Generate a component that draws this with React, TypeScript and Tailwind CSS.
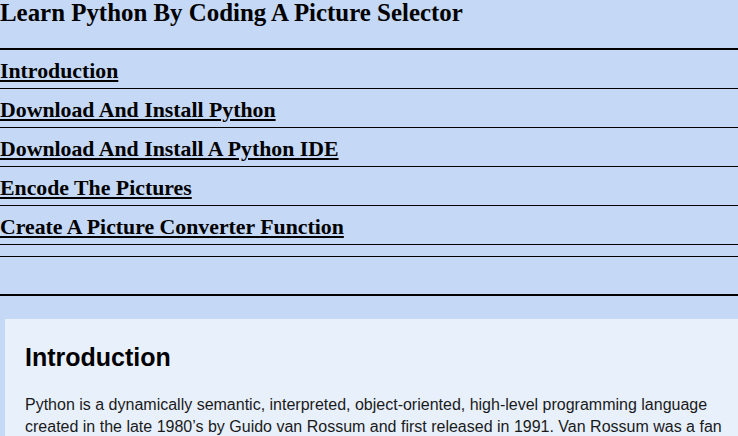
const NAV = [
  'Introduction',
  'Download And Install Python',
  'Download And Install A Python IDE',
  'Encode The Pictures',
  'Create A Picture Converter Function',
];

export default function App() {
  return (
    <div className="min-h-screen bg-[#c5d8f5] font-['Liberation_Serif',serif] text-black">
      <header>
        <h1 className="h-[48px] text-[24.9px] font-bold leading-[26px]">Learn Python By Coding A Picture Selector</h1>
        <nav className="border-t-2 border-black">
          <ul>
            {NAV.map((item) => (
              <li key={item} className="flex h-[39px] items-center border-b border-black pt-[6px]">
                <a href="#" className="text-[21.8px] font-bold leading-none underline">
                  {item}
                </a>
              </li>
            ))}
          </ul>
          <div className="mt-[11px] h-[40px] border-t border-b-2 border-black" />
        </nav>
      </header>

      <main className="pt-[23px] pl-[5px]">
        <section className="bg-[#e8f0fc] pl-5 pr-3 pt-[24px] pb-6 font-['Liberation_Sans',Arial,sans-serif]">
          <h2 className="text-[25px] font-bold leading-[29px]">Introduction</h2>
          <p className="mt-[22px] text-[16px] leading-[22px] text-[#1a1a1a]">
            Python is a dynamically semantic, interpreted, object-oriented, high-level programming language
            created in the late 1980’s by Guido van Rossum and first released in 1991. Van Rossum was a fan
            of the British comedy group Monty Python, and named the language after them.
          </p>
        </section>
      </main>
    </div>
  );
}
